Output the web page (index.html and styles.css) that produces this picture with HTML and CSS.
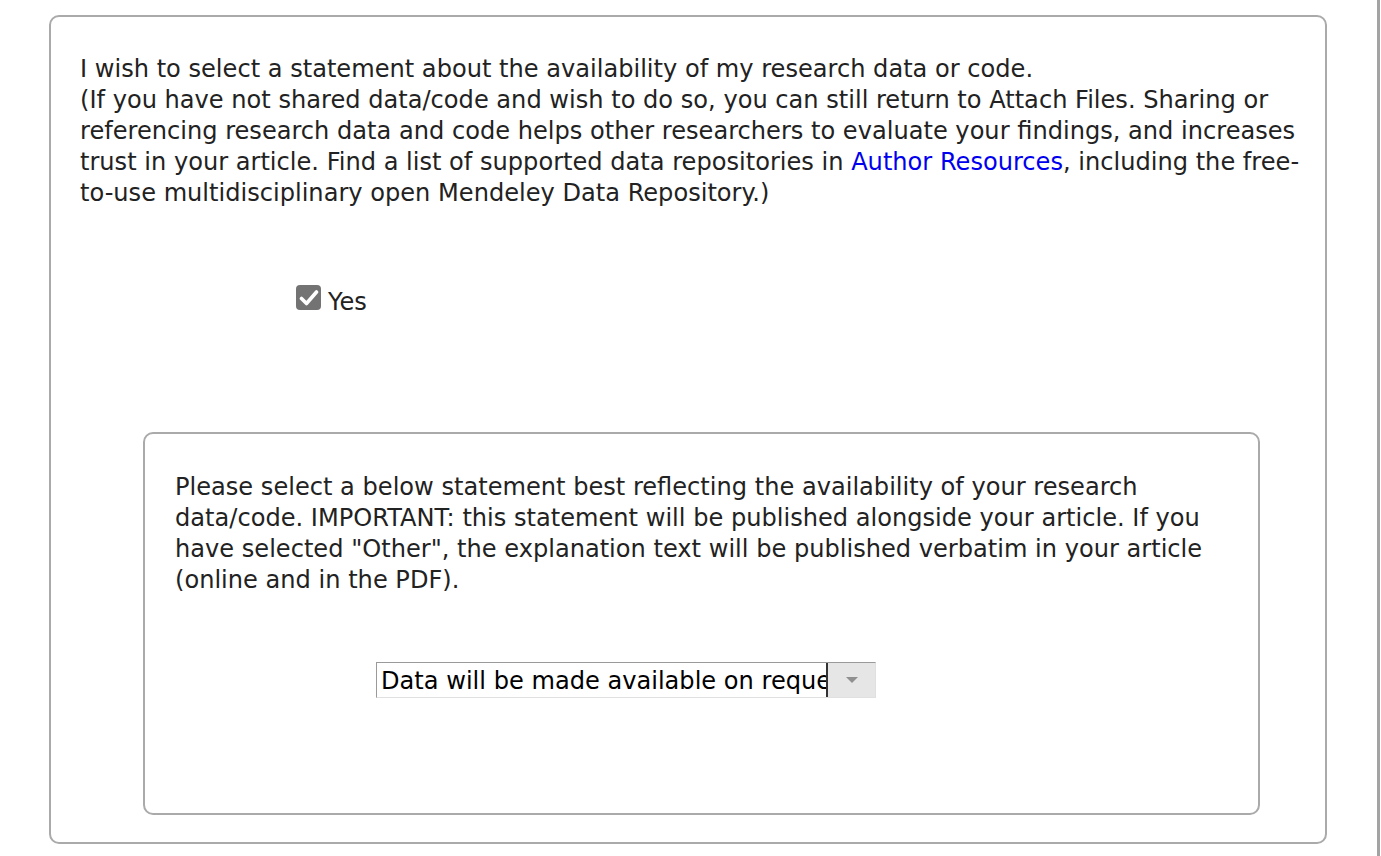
FILE: index.html
```html
<!DOCTYPE html>
<html>
<head>
<meta charset="utf-8">
<link rel="stylesheet" href="styles.css">
</head>
<body>
<div class="page">
  <div class="main">
    <div class="outer">
      <p class="intro">I wish to select a statement about the availability of my research data or code.<br>(If you have not shared data/code and wish to do so, you can still return to Attach Files. Sharing or referencing research data and code helps other researchers to evaluate your findings, and increases trust in your article. Find a list of supported data repositories in <a class="link" href="#">Author Resources</a>, including the free-to-use multidisciplinary open Mendeley Data Repository.)</p>
      <label class="check-row">
        <span class="check-box"><svg width="20" height="18" viewBox="0 0 20 18"><path d="M2.5 9.5 L7.5 14.5 L17.5 3" fill="none" stroke="#fff" stroke-width="3.6" stroke-linecap="round" stroke-linejoin="round"/></svg></span>
        <span class="check-label">Yes</span>
      </label>
      <div class="inner">
        <p class="inner-text">Please select a below statement best reflecting the availability of your research data/code. IMPORTANT: this statement will be published alongside your article. If you have selected "Other", the explanation text will be published verbatim in your article (online and in the PDF).</p>
        <div class="select-row">
          <div class="select">
            <span class="select-value">Data will be made available on request.</span>
            <span class="select-arrow"><svg width="14" height="8" viewBox="0 0 14 8"><path d="M1 1 L13 1 L7 7 Z" fill="#909090"/></svg></span>
          </div>
        </div>
      </div>
    </div>
  </div>
  <div class="edge"></div>
</div>
</body>
</html>
```
FILE: styles.css
```css
html, body {
  margin: 0;
  padding: 0;
  background: #fff;
}
body {
  font-family: Verdana, "DejaVu Sans", sans-serif;
  font-size: 24.1px;
  color: #222;
}
.page {
  display: flex;
  height: 856px;
  overflow: hidden;
}
.main {
  flex: 1;
  padding: 15px 0 0 49px;
}
.edge {
  width: 3px;
  margin-right: 1px;
  background: #a3a3a3;
}
.outer {
  box-sizing: border-box;
  width: 1278px;
  height: 829px;
  border: 2px solid #aaa;
  border-radius: 10px;
  padding: 37px 14px 0 29px;
}
.intro {
  margin: 0;
  line-height: 31px;
}
.link {
  color: #0000ee;
  text-decoration: none;
}
.check-row {
  display: flex;
  align-items: center;
  gap: 7px;
  margin: 77px 0 0 216px;
  height: 31px;
}
.check-box {
  box-sizing: border-box;
  width: 25px;
  height: 25px;
  margin-bottom: 8px;
  background: #737373;
  border-radius: 4px;
  display: flex;
  align-items: center;
  justify-content: center;
}
.check-box svg {
  display: block;
}
.inner {
  box-sizing: border-box;
  width: 1117px;
  height: 383px;
  margin: 115px 0 0 63px;
  border: 2px solid #aaa;
  border-radius: 10px;
  padding: 38px 30px 0 30px;
}
.inner-text {
  margin: 0;
  line-height: 31px;
}
.select-row {
  margin: 66px 0 0 201px;
}
.select {
  box-sizing: border-box;
  display: flex;
  width: 500px;
  height: 36px;
  border: 1px solid #9a9a9a;
  border-right-color: #e0e0e0;
  border-bottom-color: #e0e0e0;
}
.select-value {
  flex: 1;
  overflow: hidden;
  white-space: nowrap;
  color: #000;
  padding-left: 4px;
  line-height: 36px;
  border-right: 2px solid #333;
}
.select-arrow {
  width: 47px;
  background: #e6e6e6;
  display: flex;
  align-items: center;
  justify-content: center;
}
```
